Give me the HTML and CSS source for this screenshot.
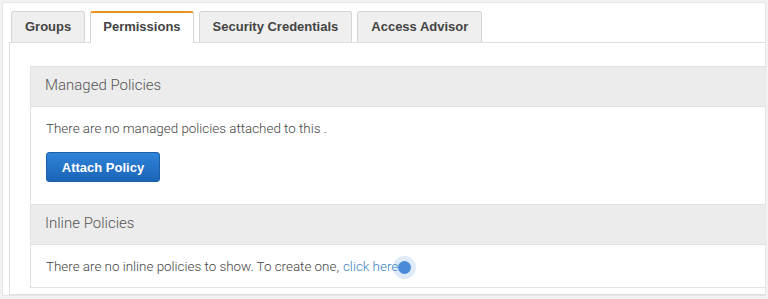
FILE: index.html
```html
<!DOCTYPE html>
<html>
<head>
<meta charset="utf-8">
<link rel="stylesheet" href="styles.css">
</head>
<body>
<div class="frame">
  <div class="tabs">
    <div class="tab">Groups</div>
    <div class="tab active">Permissions</div>
    <div class="tab">Security Credentials</div>
    <div class="tab">Access Advisor</div>
  </div>
  <div class="panel">
    <div class="section">
      <div class="sec-head">Managed Policies</div>
      <div class="sec-body">
        <p class="msg">There are no managed policies attached to this .</p>
        <button class="btn">Attach Policy</button>
      </div>
      <div class="sec-head">Inline Policies</div>
      <div class="sec-body inline">
        <p class="msg">There are no inline policies to show. To create one, <a class="link">click here</a><span class="dot"></span></p>
      </div>
    </div>
  </div>
</div>
</body>
</html>
```

FILE: styles.css
```css
html, body {
  margin: 0;
  padding: 0;
  background: #f2f2f2;
}
body {
  font-family: "Liberation Sans", Arial, sans-serif;
  color: #444;
  height: 299px;
  overflow: hidden;
}
.frame {
  margin: 2px 2px 0 2px;
  background: #fff;
  border: 1px solid #e6e6e6;
  height: 294px;
  box-sizing: border-box;
  padding: 8px 0 0 6px;
  display: flex;
  flex-direction: column;
}
.tabs {
  display: flex;
  gap: 5px;
  padding-left: 2px;
  height: 31px;
  position: relative;
  z-index: 1;
}
.tab {
  box-sizing: border-box;
  height: 31px;
  padding: 0 13px;
  font-weight: bold;
  font-size: 13px;
  line-height: 30px;
  color: #444;
  background: #efefef;
  border: 1px solid #d4d4d4;
  border-bottom: none;
  border-radius: 3px 3px 0 0;
}
.tab.active {
  background: #fff;
  border-top: 2px solid #e8921f;
  height: 32px;
  line-height: 28px;
  padding: 0 12px;
}
.panel {
  flex: 1;
  border: 1px solid #dedede;
  border-right: none;
  margin-bottom: 2px;
  padding: 23px 0 6px 20px;
  display: flex;
  flex-direction: column;
}
.section {
  border: 1px solid #e2e2e2;
  border-right: none;
}
.sec-head {
  background: #ececec;
  height: 39px;
  line-height: 37px;
  padding-left: 14px;
  font-family: "Roboto", "Liberation Sans", sans-serif;
  font-weight: 300;
  font-size: 15px;
  color: #555;
  border-bottom: 1px solid #e2e2e2;
}
.sec-body {
  padding: 14px 0 22px 15px;
  border-bottom: 1px solid #e2e2e2;
}
.sec-body.inline {
  padding: 14px 0 12px 15px;
  border-bottom: none;
}
.msg {
  margin: 0;
  font-family: "Roboto", "Liberation Sans", sans-serif;
  font-weight: 300;
  font-size: 13.4px;
  line-height: 16px;
  color: #444;
  display: flex;
  align-items: center;
}
.btn {
  margin-top: 15px;
  margin-left: 0;
  width: 114px;
  height: 30px;
  border: 1px solid #1a5fa8;
  border-radius: 3px;
  background: linear-gradient(#2f84d9, #1b64b7);
  color: #fff;
  font-family: "Liberation Sans", Arial, sans-serif;
  font-weight: bold;
  font-size: 13px;
  padding: 0;
}
.link {
  color: #3a7fc3;
  margin-left: 4px;
}
.dot {
  width: 13px;
  height: 13px;
  border-radius: 50%;
  background: #4a8ad9;
  box-shadow: 0 0 0 5px rgba(74, 138, 217, 0.18);
  margin-left: 0px;
}
```
